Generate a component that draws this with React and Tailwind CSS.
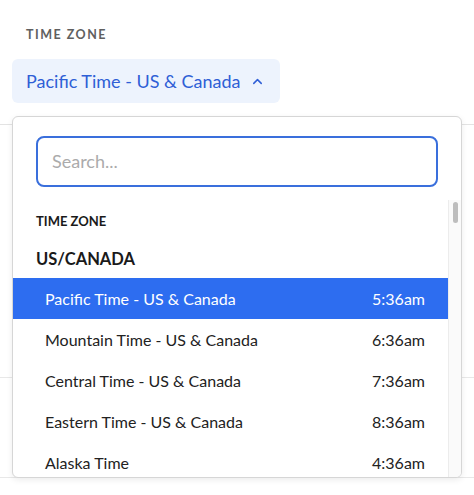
import React from 'react';
import { ChevronUp } from 'lucide-react';

const ZONES = [
  { name: 'Pacific Time - US & Canada', time: '5:36am', active: true },
  { name: 'Mountain Time - US & Canada', time: '6:36am' },
  { name: 'Central Time - US & Canada', time: '7:36am' },
  { name: 'Eastern Time - US & Canada', time: '8:36am' },
  { name: 'Alaska Time', time: '4:36am' },
];

export default function App() {
  return (
    <div
      className="relative h-[495px] w-[474px] overflow-hidden bg-white"
      style={{ fontFamily: 'Lato, "Noto Sans", sans-serif' }}
    >
      {/* page behind the popover */}
      <div className="h-[125px] border-b border-[#e3e3e3] pt-[28px]">
        <div className="pl-[26px] text-[12.5px] font-bold leading-[14px] tracking-[0.12em] text-[#606060]">
          TIME ZONE
        </div>
        <button className="ml-[12px] mt-[17px] flex h-[44px] w-[268px] items-center gap-[10px] rounded-md bg-[#edf3fd] px-[14px] text-[18px] text-[#2f5fd6]">
          <span>Pacific Time - US &amp; Canada</span>
          <ChevronUp size={15} strokeWidth={2.4} />
        </button>
      </div>
      <div className="h-[253px] border-b border-[#e8e8e8]" />
      <div className="h-[100px] border-b border-[#e8e8e8]" />

      {/* dropdown */}
      <div className="absolute left-[12px] top-[116px] flex h-[362px] w-[450px] flex-col overflow-hidden rounded-md border border-[#d6d6d6] bg-white shadow-[0_2px_6px_rgba(0,0,0,0.08)]">
        <div className="px-[23px] pt-[19px]">
          <div className="flex h-[51px] items-center rounded-lg border-2 border-[#3a6fdc] px-[14px] text-[18px] text-[#ababab]">
            Search...
          </div>
        </div>

        <div className="mt-[13px] flex min-h-0 flex-1">
          <div className="flex-1">
            <div className="flex h-[44px] items-center pl-[23px] text-[13px] font-bold text-[#1a1a1a]">
              TIME ZONE
            </div>
            <div className="flex h-[34px] items-start pl-[23px] pt-[3px] text-[16.5px] font-bold text-[#1a1a1a]">
              US/CANADA
            </div>
            {ZONES.map((z) => (
              <div
                key={z.name}
                className={
                  'flex h-[41px] items-center justify-between pl-[32px] pr-[23px] text-[16px] ' +
                  (z.active ? 'bg-[#2d6df0] text-white' : 'text-[#222]')
                }
              >
                <span>{z.name}</span>
                <span>{z.time}</span>
              </div>
            ))}
          </div>
          {/* scrollbar */}
          <div className="w-[13px] border-l border-[#ececec] bg-[#fafafa] pt-[2px]">
            <div className="mx-auto h-[21px] w-[5px] rounded-full bg-[#bdbdbd]" />
          </div>
        </div>
      </div>
    </div>
  );
}
